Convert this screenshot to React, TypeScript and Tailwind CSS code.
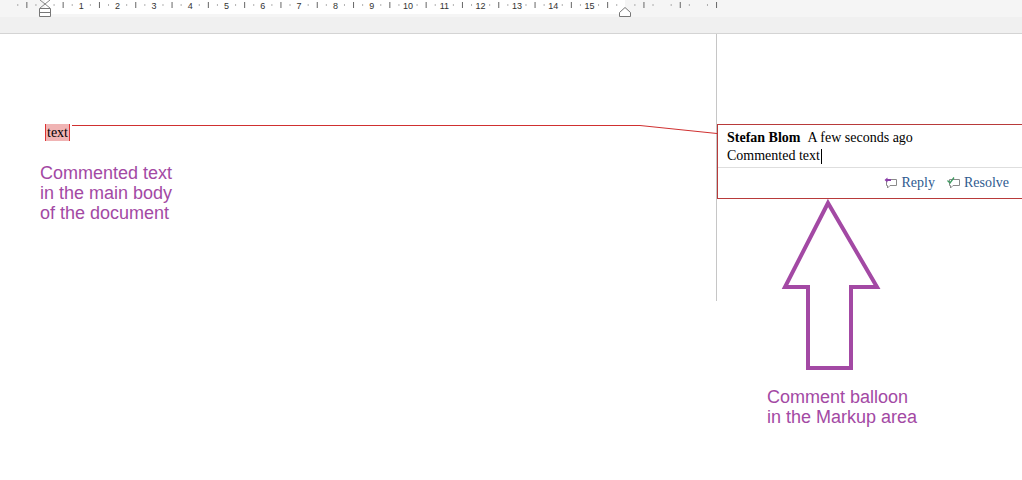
import React from "react";

const SANS = { fontFamily: '"Liberation Sans", Arial, sans-serif' };
const SERIF = { fontFamily: '"Liberation Serif", "Times New Roman", serif' };

const Ruler = () => {
  const ticks: React.ReactNode[] = [];
  // zero at x=45, 1cm = 36.3px, quarter marks
  for (let i = -5; i < 75; i++) {
    const x = 45 + i * 9.075;
    if (x < 0 || x > 1022) continue;
    const q = ((i % 4) + 4) % 4;
    if (q === 0) {
      const n = i / 4;
      if (n > 0 && n < 16) {
        ticks.push(
          <text key={i} x={x} y={9} fontSize="9" textAnchor="middle" fill="#333" fontFamily="Liberation Sans, sans-serif">
            {n}
          </text>
        );
      }
    } else if (q === 2) {
      ticks.push(<line key={i} x1={x} x2={x} y1={2} y2={8} stroke="#666" strokeWidth="1" />);
    } else {
      ticks.push(<rect key={i} x={x - 0.5} y={4.5} width={1} height={1} fill="#666" />);
    }
  }
  return (
    <svg width="1022" height="17" className="block">
      <rect x="0" y="0" width="1022" height="17" fill="#f5f5f5" />
      <rect x="45" y="0" width="580" height="14" fill="#ffffff" />
      {ticks}
      <path d="M40 0 L50 8 M50 0 L40 8" stroke="#888" fill="none" />
      <path d="M39.5 8.5 H50.5 V16.5 H39.5 Z M39.5 12.5 H50.5" stroke="#777" fill="#fff" />
      <path d="M619.5 12.5 L625 7.5 L630.5 12.5 V16.5 H619.5 Z" stroke="#777" fill="#fff" />
    </svg>
  );
};

const Bubble = ({ check }: { check?: boolean }) => (
  <svg width="14" height="12" viewBox="0 0 14 12" className="inline-block">
    <path d="M2.5 2.5 H12.5 V8.5 H6 L3.5 11 V8.5 H2.5 Z" fill="none" stroke="#8a8a8a" />
    {check ? (
      <path d="M0.5 3.5 L3 6 L7 0.5" fill="none" stroke="#3c9a5f" strokeWidth="1.3" />
    ) : (
      <path d="M0.5 3 L3.5 0.5 V2 H7 V4 H3.5 V5.5 Z" fill="#8b3fa8" />
    )}
  </svg>
);

export default function App() {
  return (
    <div className="relative w-[1022px] h-[480px] bg-white overflow-hidden">
      <Ruler />
      <div className="h-[17px] bg-[#f0f0f0] border-b border-[#d4d4d4]" />
      <div className="flex">
        <div className="w-[717px] h-[267px] border-r border-[#c6c6c6] relative">
          <div
            style={SERIF}
            className="absolute left-[45px] top-[90px] h-[17px] px-[1px] bg-[#f0b4b4] border-x border-[#d33] text-[14px] leading-[17px] text-black"
          >
            text
          </div>
          <div style={SANS} className="absolute left-[40px] top-[129px] text-[#a349a4] text-[18px] leading-[20px]">
            Commented text
            <br />
            in the main body
            <br />
            of the document
          </div>
        </div>
        <div className="flex-1 pt-[90px]">
          <div style={SERIF} className="h-[75px] border border-[#b83a3a] border-r-0 text-[14px] text-black">
            <div className="px-[9px] pt-[4px] pb-[2px] leading-[18px] border-b border-[#dedede]">
              <div>
                <span className="font-bold">Stefan Blom</span>
                <span className="ml-[7px]">A few seconds ago</span>
              </div>
              <div className="flex items-center">
                Commented text<span className="inline-block w-px h-[15px] bg-black ml-px" />
              </div>
            </div>
            <div className="flex justify-end gap-[12px] pr-[13px] pt-[6px] text-[#2e5a8f] leading-[18px]">
              <span className="flex items-center gap-[3px]">
                <Bubble />
                Reply
              </span>
              <span className="flex items-center gap-[3px]">
                <Bubble check />
                Resolve
              </span>
            </div>
          </div>
        </div>
      </div>
      <div style={SANS} className="absolute left-[767px] top-[387px] text-[#a349a4] text-[18px] leading-[20px]">
        Comment balloon
        <br />
        in the Markup area
      </div>
      <svg className="absolute left-0 top-0 pointer-events-none" width="1022" height="480">
        <path d="M72 125.5 H640 L717 133.5" fill="none" stroke="#d03030" strokeWidth="1" />
        <path
          d="M828 203 L877 287 H851 V368 H808 V287 H785 Z"
          fill="none"
          stroke="#a349a4"
          strokeWidth="4"
          strokeLinejoin="miter"
        />
      </svg>
    </div>
  );
}
